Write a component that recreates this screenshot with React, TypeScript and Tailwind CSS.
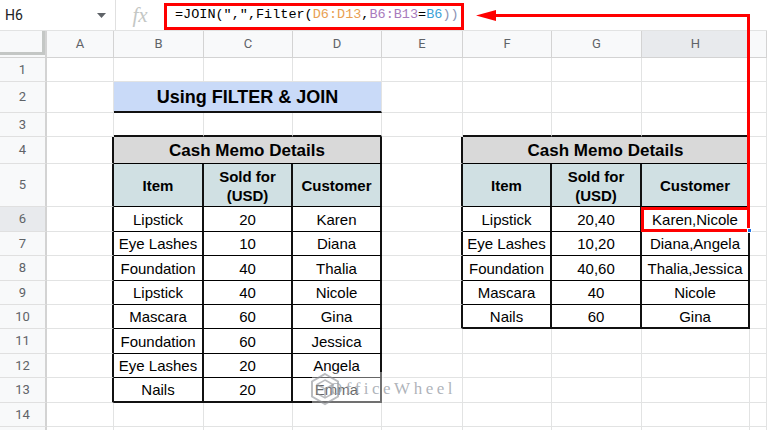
import React from 'react';

type Kind = 'empty' | 'banner' | 'title' | 'head' | 'data';
type Cell = { kind: Kind; text?: string; span?: number };

const E: Cell = { kind: 'empty' };
const d = (text: string): Cell => ({ kind: 'data', text });
const h = (text: string): Cell => ({ kind: 'head', text });
const blank = (): Cell[] => Array(9).fill(E);

const COLS = ['A', 'B', 'C', 'D', 'E', 'F', 'G', 'H', ''];

// sheet rows 1..15, columns A..I
const sheet: Cell[][] = [
    blank(),
    [E, { kind: 'banner', text: 'Using FILTER & JOIN', span: 3 }, E, E, E, E, E],
    blank(),
    [E, { kind: 'title', text: 'Cash Memo Details', span: 3 }, E, { kind: 'title', text: 'Cash Memo Details', span: 3 }, E],
    [E, h('Item'), h('Sold for\n(USD)'), h('Customer'), E, h('Item'), h('Sold for\n(USD)'), h('Customer'), E],
    [E, d('Lipstick'), d('20'), d('Karen'), E, d('Lipstick'), d('20,40'), d('Karen,Nicole'), E],
    [E, d('Eye Lashes'), d('10'), d('Diana'), E, d('Eye Lashes'), d('10,20'), d('Diana,Angela'), E],
    [E, d('Foundation'), d('40'), d('Thalia'), E, d('Foundation'), d('40,60'), d('Thalia,Jessica'), E],
    [E, d('Lipstick'), d('40'), d('Nicole'), E, d('Mascara'), d('40'), d('Nicole'), E],
    [E, d('Mascara'), d('60'), d('Gina'), E, d('Nails'), d('60'), d('Gina'), E],
    [E, d('Foundation'), d('60'), d('Jessica'), E, E, E, E, E],
    [E, d('Eye Lashes'), d('20'), d('Angela'), E, E, E, E, E],
    [E, d('Nails'), d('20'), d('Emma'), E, E, E, E, E],
    blank(),
    blank(),
];

// tables live at B4:D13 and F4:H10 (col index A = 0)
function inTable(r: number, c: number) {
    return (c >= 1 && c <= 3 && r >= 4 && r <= 13) || (c >= 5 && c <= 7 && r >= 4 && r <= 10);
}

const kindClass: Record<Kind, string> = {
    empty: '',
    banner: 'bg-[#c9daf8] text-[18px] font-bold pt-[2px]',
    title: 'bg-[#d9d9d9] text-[17px] font-bold pt-[1px]',
    head: 'bg-[#d0e0e3] text-[15px] font-bold leading-[19px] whitespace-pre-line pt-[1px]',
    data: 'text-[15px] pt-[2px]',
};

const spanClass = ['', 'col-span-1', 'col-span-2', 'col-span-3'];

function SheetCell({ cell, r, c }: { cell: Cell; r: number; c: number }) {
    const span = cell.span ?? 1;
    const last = c + span - 1;
    const rightDark = inTable(r, last) || inTable(r, last + 1);
    let bottomDark = cell.kind === 'banner';
    let bottomEdge = cell.kind === 'banner';
    for (let i = c; i <= last; i++) {
        if (inTable(r, i) || inTable(r + 1, i)) bottomDark = true;
        if (inTable(r, i) !== inTable(r + 1, i)) bottomEdge = true;
    }
    return (
        <div
            className={[
                'flex items-center justify-center text-center text-black',
                spanClass[span],
                rightDark ? 'border-r-2 border-r-[#111]' : 'border-r border-r-[#e2e3e3]',
                bottomDark
                    ? bottomEdge
                        ? 'border-b-2 border-b-[#111]'
                        : 'border-b border-b-black'
                    : 'border-b border-b-[#e2e3e3]',
                kindClass[cell.kind],
            ].join(' ')}
        >
            {cell.text}
        </div>
    );
}

function FormulaBar() {
    return (
        <div className="flex h-[31px] items-center border-b border-[#e2e3e3] bg-white">
            <div className="flex h-full w-[116px] items-center justify-between border-r border-[#e0e0e0] pl-[5px] pr-[9px]">
                <span className="text-[14px] text-[#202124] [font-family:Roboto,'Liberation_Sans',sans-serif]">H6</span>
                <svg width="9" height="5" viewBox="0 0 9 5">
                    <path d="M0 0h9L4.5 5z" fill="#5f6368" />
                </svg>
            </div>
            <div className="flex w-[48px] justify-center">
                <span className="text-[21px] italic leading-none text-[#c4c7c5] [font-family:'Liberation_Serif',serif]">fx</span>
            </div>
            <div className="pl-[11px] text-[13.5px] text-black [font-family:'Liberation_Mono',monospace]">
                =JOIN(",",Filter(<span className="text-[#e99f52]">D6:D13</span>,<span className="text-[#a97bbd]">B6:B13</span>=<span className="text-[#3ba2d8]">B6</span><span className="text-[#8b93b6]">))</span>
            </div>
        </div>
    );
}

function Watermark() {
    return (
        <div className="pointer-events-none absolute left-[310px] top-[372px] flex items-center">
            <div className="absolute left-[2px] top-0 h-[31px] w-[72px] bg-white/40" />
            <svg width="30" height="34" viewBox="0 0 30 34" className="relative opacity-60">
                <path d="M15 2 28 9.5v15L15 32 2 24.5v-15z" fill="none" stroke="#8d9096" strokeWidth="2" />
                <path d="M15 8 23 12.5v9L15 26 7 21.5v-9z" fill="none" stroke="#8d9096" strokeWidth="1.5" />
                <path d="M7 12.5 15 17l8-4.5M15 17v9" fill="none" stroke="#8d9096" strokeWidth="1.5" />
            </svg>
            <span className="relative -ml-[10px] text-[17px] tracking-[3.5px] text-[#9aa0a8]/80 [font-family:'Liberation_Serif',serif]">
                OfficeWheel
            </span>
        </div>
    );
}

function Callouts() {
    return (
        <>
            <div className="absolute left-[164px] top-[3px] h-[27px] w-[300px] border-[3px] border-[#ff0000]" />
            <div className="absolute left-[490px] top-[14px] h-[3px] w-[260px] bg-[#ff0000]" />
            <svg className="absolute left-[476px] top-[9px]" width="20" height="13" viewBox="0 0 20 13">
                <path d="M0 6.5 20 1v11z" fill="#ff0000" />
            </svg>
            <div className="absolute left-[747px] top-[14px] h-[194px] w-[3px] bg-[#ff0000]" />
            <div className="absolute left-[641px] top-[207px] h-[25px] w-[109px] border-[3px] border-[#ff0000]" />
            <div className="absolute left-[747px] top-[228px] h-[5px] w-[5px] border border-white bg-[#1a73e8]" />
        </>
    );
}

export default function App() {
    return (
        <div className="relative h-[430px] w-[767px] overflow-hidden bg-white [font-family:'Liberation_Sans',Arial,sans-serif]">
            <FormulaBar />
            <div className="grid grid-cols-[47px_67px_90px_89px_89px_81px_89px_90px_108px_1fr] grid-rows-[27px_24px_31px_24px_27px_43px_25px_24px_25px_24px_24px_25px_24px_25px_24px_30px]">
                <div className="border-b border-r-2 border-[#d3d3d3] bg-[#f8f9fa]">
                    <div className="h-[24px] w-[45px] border-b-[3px] border-r-[3px] border-[#c4c7c5]" />
                </div>
                {COLS.map((col) => (
                    <div
                        key={col || 'I'}
                        className={`flex items-center justify-center border-b border-r border-[#d3d3d3] text-[13px] text-[#5f6368] [font-family:Roboto,sans-serif] ${
                            col === 'H' ? 'bg-[#e8eaed]' : 'bg-[#f8f9fa]'
                        }`}
                    >
                        {col}
                    </div>
                ))}
                {sheet.map((row, ri) => {
                    const r = ri + 1;
                    let c = 0;
                    return (
                        <React.Fragment key={r}>
                            <div
                                className={`flex items-center justify-center border-b border-r-2 border-b-[#e0e0e0] border-r-[#d3d3d3] text-[13px] text-[#5f6368] [font-family:Roboto,sans-serif] ${
                                    r === 6 ? 'bg-[#e8eaed]' : 'bg-[#f8f9fa]'
                                }`}
                            >
                                {r < 15 ? r : ''}
                            </div>
                            {row.map((cell, i) => {
                                const start = c;
                                c += cell.span ?? 1;
                                return <SheetCell key={i} cell={cell} r={r} c={start} />;
                            })}
                        </React.Fragment>
                    );
                })}
            </div>
            <Watermark />
            <Callouts />
        </div>
    );
}
